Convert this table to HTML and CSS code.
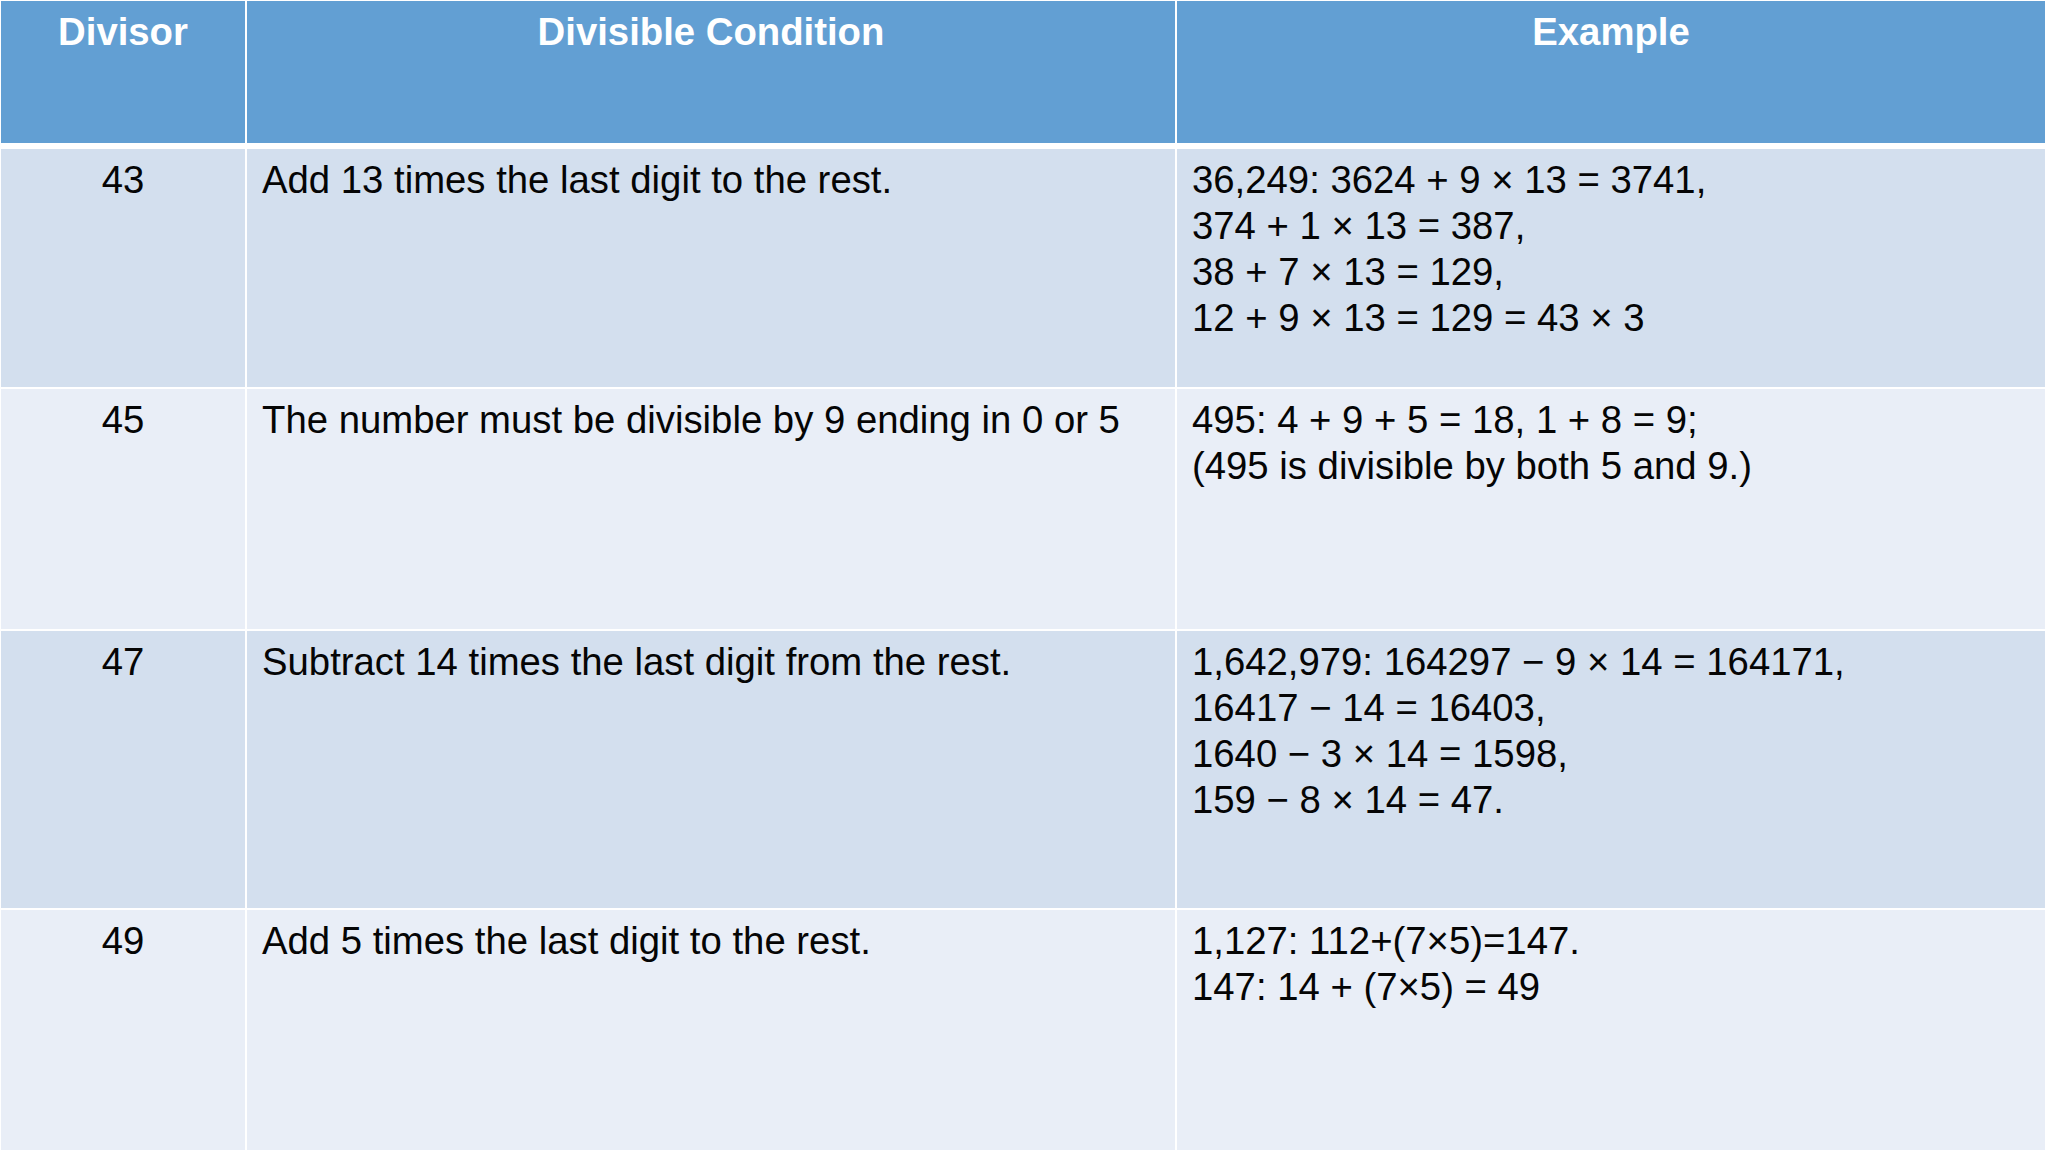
FILE: index.html
```html
<!DOCTYPE html>
<html lang="en">
<head>
<meta charset="utf-8">
<title>Divisibility rules</title>
<link rel="stylesheet" href="styles.css">
</head>
<body>
<div class="table">
  <div class="cell head">Divisor</div>
  <div class="cell head">Divisible Condition</div>
  <div class="cell head">Example</div>

  <div class="cell odd num">43</div>
  <div class="cell odd">Add 13 times the last digit to the rest.</div>
  <div class="cell odd">36,249: 3624 + 9 × 13 = 3741,<br>374 + 1 × 13 = 387,<br>38 + 7 × 13 = 129,<br>12 + 9 × 13 = 129 = 43 × 3</div>

  <div class="cell even num">45</div>
  <div class="cell even">The number must be divisible by 9 ending in 0 or 5</div>
  <div class="cell even">495: 4 + 9 + 5 = 18, 1 + 8 = 9;<br>(495 is divisible by both 5 and 9.)</div>

  <div class="cell odd num">47</div>
  <div class="cell odd">Subtract 14 times the last digit from the rest.</div>
  <div class="cell odd">1,642,979: 164297 − 9 × 14 = 164171,<br>16417 − 14 = 16403,<br>1640 − 3 × 14 = 1598,<br>159 − 8 × 14 = 47.</div>

  <div class="cell even num">49</div>
  <div class="cell even">Add 5 times the last digit to the rest.</div>
  <div class="cell even">1,127: 112+(7×5)=147.<br>147: 14 + (7×5) = 49</div>
</div>
</body>
</html>
```
FILE: styles.css
```css
html, body {
  margin: 0;
  padding: 0;
  background: #ffffff;
}

body {
  width: 2048px;
  height: 1152px;
  overflow: hidden;
  font-family: "Liberation Sans", Arial, sans-serif;
}

.table {
  display: grid;
  grid-template-columns: 244px 928px 868px;
  grid-template-rows: 146px 238px 240px 277px 240px;
  column-gap: 2px;
  row-gap: 2px;
  padding: 1px 0 0 1px;
  background: #ffffff;
}

.cell {
  box-sizing: border-box;
  font-size: 38.3px;
  line-height: 46px;
  color: #050505;
  padding: 8px 15px 0 15px;
  white-space: nowrap;
}

.head {
  align-self: start;
  height: 142px;
  background: #629fd3;
  color: #ffffff;
  font-weight: bold;
  text-align: center;
  padding-top: 8px;
}

.odd {
  background: #d3dfee;
}

.even {
  background: #e9eef7;
}

.num {
  text-align: center;
  padding-left: 0;
  padding-right: 0;
}
```
